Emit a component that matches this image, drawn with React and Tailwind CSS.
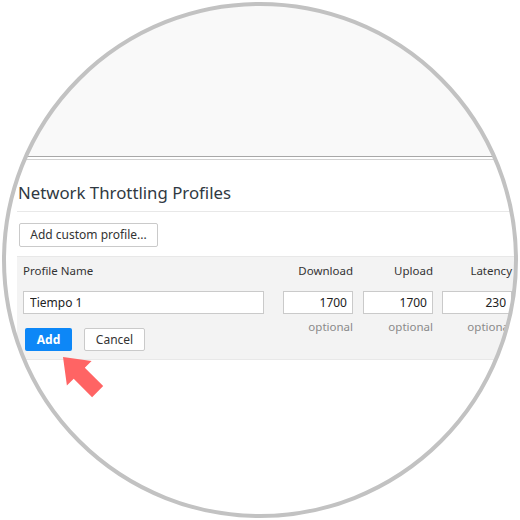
export default function App() {
  const font = { fontFamily: '"Segoe UI", "Noto Sans", "Open Sans", sans-serif' };

  const NumField = ({ label, value, className }) => (
    <div className={`flex w-[70px] flex-col items-end ${className}`}>
      <div className="h-[16px] text-[11.5px] leading-[16px] text-[#333]">{label}</div>
      <input
        readOnly
        value={value}
        className="mt-[12px] h-[23px] w-full border border-[#cacaca] bg-white px-[5px] text-right text-[12px] text-[#222] outline-none"
      />
      <div className="mt-[5px] h-[16px] text-[11.5px] leading-[16px] text-[#8a8a8a]">optional</div>
    </div>
  );

  return (
    <div className="relative h-[520px] w-[520px] overflow-hidden bg-white" style={font}>
      {/* page seen through the lens */}
      <div className="h-full w-full bg-white [clip-path:circle(256px_at_260px_260px)]">
        <div className="h-[157px] border-b border-[#a8a8a8] bg-[#f9f9f9]" />
        <div className="h-[3px] border-b border-[#d2d2d2]" />

        <div className="pl-[17px]">
          <h1 className="border-b border-[#e8e8e8] pb-[6px] pl-[1px] pt-[21px] text-[16.8px] leading-[24px] text-[#303942]">
            Network Throttling Profiles
          </h1>

          <div className="pl-[2px] pt-[9px]">
            <button className="h-[24px] w-[139px] rounded-[2px] border border-[#cacaca] bg-white text-[12px] text-[#333]">
              Add custom profile...
            </button>
          </div>

          <div className="mt-[9px] flex h-[104px] border-y border-[#e8e8e8] bg-[#f3f3f3] pl-[6px] pt-[6px]">
            <div className="flex w-[241px] flex-col">
              <div className="h-[16px] text-[11.5px] leading-[16px] text-[#333]">Profile Name</div>
              <input
                readOnly
                value="Tiempo 1"
                className="mt-[12px] h-[23px] w-full border border-[#cacaca] bg-white px-[6px] text-[12px] text-[#222] outline-none"
              />
              <div className="ml-[2px] mt-[14px] flex gap-[12px]">
                <button className="h-[23px] w-[47px] rounded-[2px] bg-[#0d87f7] text-[12px] font-bold text-white">
                  Add
                </button>
                <button className="h-[23px] w-[61px] rounded-[2px] border border-[#cacaca] bg-white text-[12px] text-[#333]">
                  Cancel
                </button>
              </div>
            </div>
            <NumField label="Download" value="1700" className="ml-[19px]" />
            <NumField label="Upload" value="1700" className="ml-[10px]" />
            <NumField label="Latency" value="230" className="ml-[9px]" />
          </div>
        </div>
      </div>

      {/* pointer arrow */}
      <svg className="absolute left-0 top-0" width="520" height="520" viewBox="0 0 520 520">
        <polygon
          fill="#ff6464"
          points="63,357 91.6,360.9 84.8,367.7 103.2,386.1 92.1,397.2 73.7,378.8 66.9,385.6"
        />
      </svg>

      {/* lens ring */}
      <div className="pointer-events-none absolute left-[2px] top-[2px] h-[516px] w-[516px] rounded-full border-[4px] border-[#c2c2c2]" />
    </div>
  );
}
